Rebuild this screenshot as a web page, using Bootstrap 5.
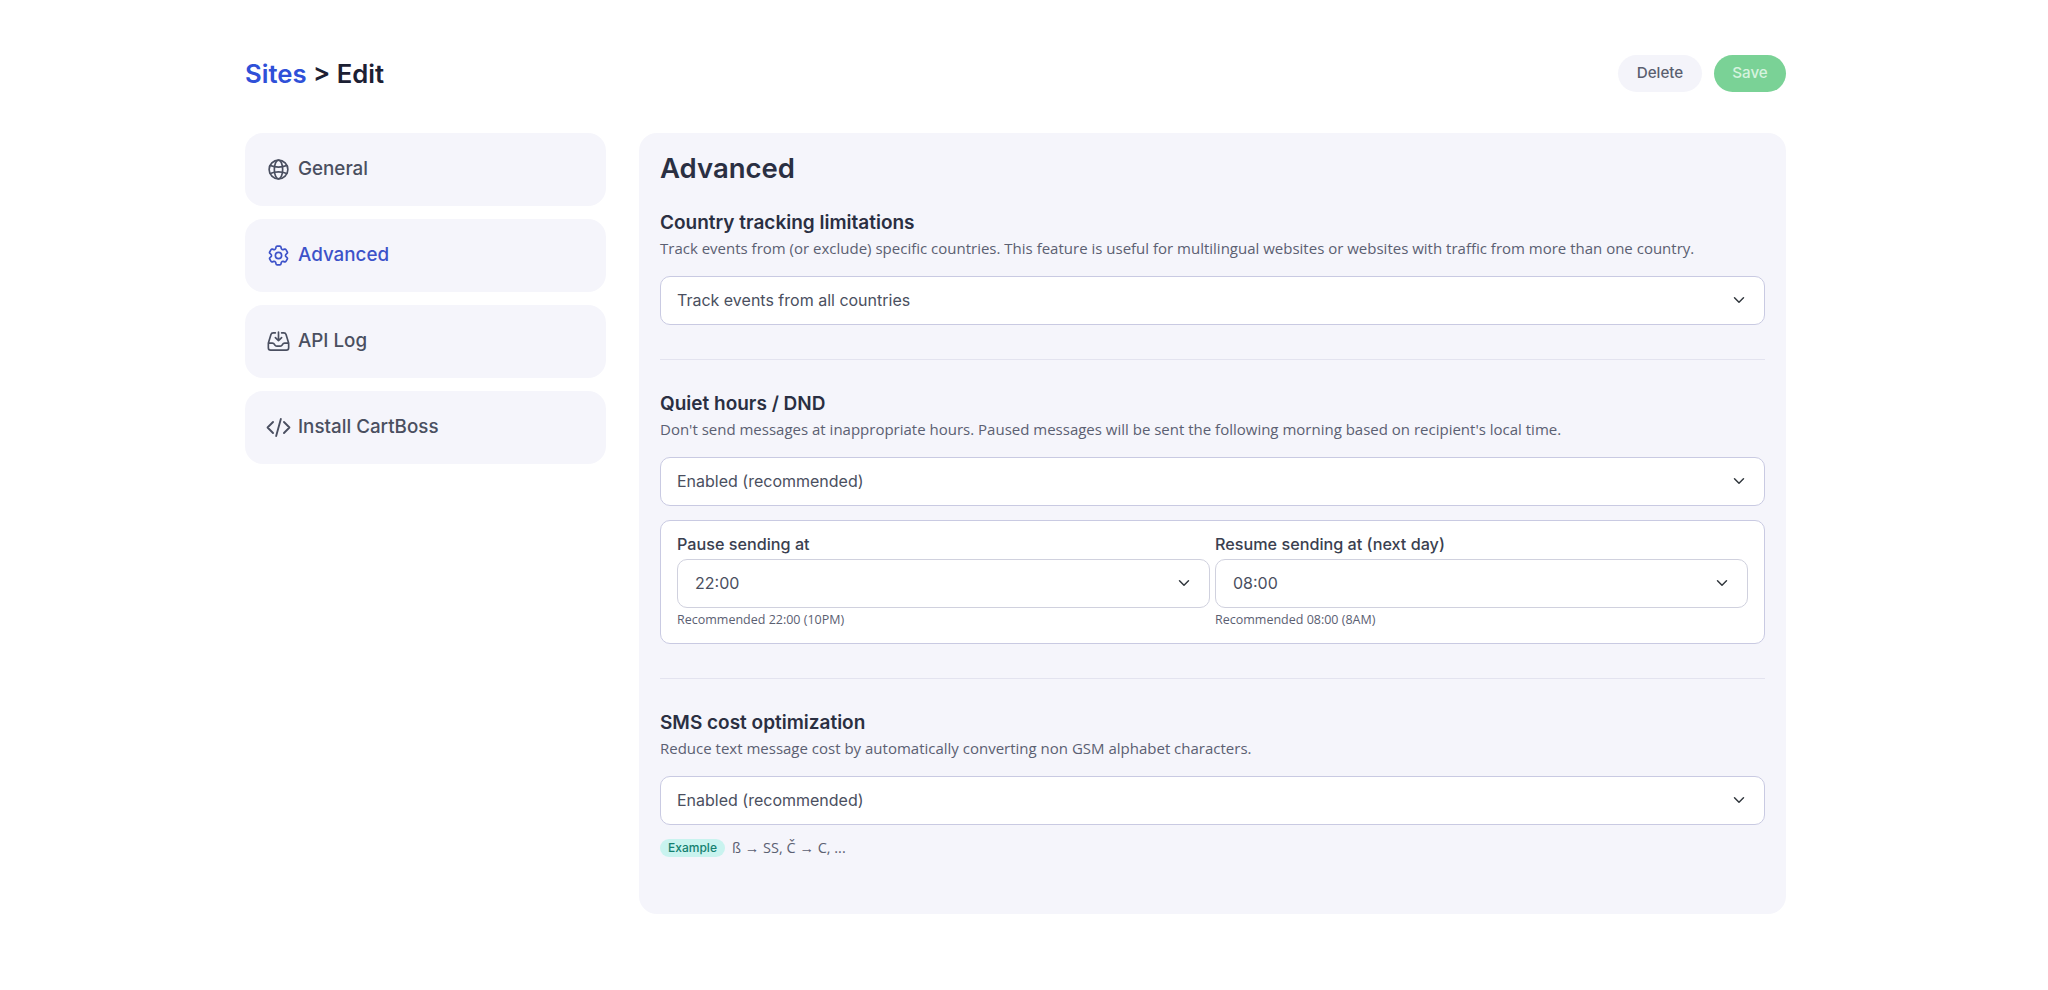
<!doctype html>
<html lang="en">
<head>
<meta charset="utf-8">
<title>Sites &gt; Edit</title>
<link rel="stylesheet" href="https://cdn.jsdelivr.net/npm/bootstrap@5.3.0/dist/css/bootstrap.min.css">
<style>
body{background:#fff;font-family:"Inter","Liberation Sans",sans-serif;color:#2a2f42;}
.page-shell{width:1541px;margin-left:245px;padding-top:55px;}
.page-head{height:37px;margin-bottom:41px;}
.page-title{font-size:25.7px;font-weight:600;line-height:36px;margin:0;color:#1c2033;}
.page-title a{color:#2f50d8;text-decoration:none;}
.btn-pill{height:37px;border-radius:19px;border:0;font-size:15.2px;font-weight:500;padding:0 0 2px;line-height:35px;}
.btn-del{width:84px;background:#f4f4fa;color:#5a5f70;}
.btn-sv{width:72px;background:#7ad296;color:#d6f3df;}
.btn-sv:disabled{background:#7ad296;color:#d6f3df;opacity:1;}
.side-col{width:361px;flex:none;gap:13px;}
.side-item{height:73px;background:#f5f5fb;border-radius:18px;padding:0 0 1px 21px;gap:7px;color:#4a4f60;font-size:18.8px;font-weight:500;text-decoration:none;}
.side-item svg{width:25px;height:25px;flex:none;}
.side-item.is-on{color:#3d52c9;}
.main-col{width:1147px;height:781px;margin-left:33px;background:#f5f5fb;border-radius:18px;padding:16.5px 21px 0;}
.main-title{font-size:27.5px;font-weight:600;line-height:36px;margin:0 0 24px;color:#2a2f42;}
.sec-title{font-size:19px;font-weight:600;line-height:26px;margin:0;color:#2a2f42;}
.sec-desc{font-family:"Open Sans","Noto Sans",sans-serif;font-size:15px;line-height:24px;margin:0 0 16px;color:#5b6072;}
.form-select.sel-x{height:49px;border:1.5px solid #c9cae2;border-radius:10px;padding:0 40px 0 16px;font-size:16px;color:#4a4f60;background-position:right 17px center;box-shadow:none;}
.form-select.sel-t{border-color:#d0d1de;padding-left:17px;}
.sec-rule{margin:34px 0 31px;border:0;border-top:1px solid #e3e3ef;opacity:1;}
.time-box{height:124px;margin-top:14px;background:#fff;border:1.5px solid #c9cae2;border-radius:10px;padding:11px 16px 0;gap:5px;}
.time-cell{flex:1 1 0;min-width:0;}
.time-label{display:block;font-size:16.2px;font-weight:500;line-height:24px;margin:0 0 3px;color:#3a3f50;}
.time-hint{font-family:"Open Sans","Noto Sans",sans-serif;font-size:12.5px;line-height:16px;margin-top:4px;color:#5b6072;}
.ex-row{margin-top:13px;gap:7px;font-family:"Open Sans","Noto Sans",sans-serif;font-size:14.5px;color:#5b6072;line-height:20px;}
.ex-tag{font-family:"Inter",sans-serif;background:#c9f3ef;color:#14806f;border-radius:9px;font-size:12px;font-weight:500;width:65px;height:18px;line-height:18px;text-align:center;}
</style>
</head>
<body>
<div class="page-shell">
  <header class="page-head d-flex justify-content-between align-items-center">
    <h1 class="page-title"><a href="#">Sites</a> &gt; Edit</h1>
    <div class="d-flex gap-2">
      <button type="button" class="btn btn-pill btn-del">Delete</button>
      <button type="button" class="btn btn-pill btn-sv ms-1" disabled>Save</button>
    </div>
  </header>
  <div class="d-flex align-items-start">
    <nav class="side-col d-flex flex-column">
      <a href="#" class="side-item d-flex align-items-center">
        <svg viewBox="0 0 24 24" fill="none" stroke="currentColor" stroke-width="1.6" stroke-linecap="round" stroke-linejoin="round"><circle cx="12" cy="12" r="9"/><ellipse cx="12" cy="12" rx="4" ry="9"/><path d="M4 8.2c5 1.8 11 1.8 16 0M4 15.8c5-1.8 11-1.8 16 0"/></svg>
        General
      </a>
      <a href="#" class="side-item is-on d-flex align-items-center">
        <svg viewBox="0 0 24 24" fill="none" stroke="currentColor" stroke-width="1.6" stroke-linecap="round" stroke-linejoin="round"><path d="M9.594 3.94c.09-.542.56-.94 1.11-.94h2.593c.55 0 1.02.398 1.11.94l.213 1.281c.063.374.313.686.645.87.074.04.147.083.22.127.325.196.72.257 1.075.124l1.217-.456a1.125 1.125 0 0 1 1.37.49l1.296 2.247a1.125 1.125 0 0 1-.26 1.431l-1.003.827c-.293.241-.438.613-.43.992a7.723 7.723 0 0 1 0 .255c-.008.378.137.75.43.991l1.004.827c.424.35.534.955.26 1.43l-1.298 2.247a1.125 1.125 0 0 1-1.369.491l-1.217-.456c-.355-.133-.75-.072-1.076.124a6.47 6.47 0 0 1-.22.128c-.331.183-.581.495-.644.869l-.213 1.281c-.09.543-.56.94-1.11.94h-2.594c-.55 0-1.019-.398-1.11-.94l-.213-1.281c-.062-.374-.312-.686-.644-.87a6.52 6.52 0 0 1-.22-.127c-.325-.196-.72-.257-1.076-.124l-1.217.456a1.125 1.125 0 0 1-1.369-.49l-1.297-2.247a1.125 1.125 0 0 1 .26-1.431l1.004-.827c.292-.24.437-.613.43-.991a6.932 6.932 0 0 1 0-.255c.007-.38-.138-.751-.43-.992l-1.004-.827a1.125 1.125 0 0 1-.26-1.43l1.297-2.247a1.125 1.125 0 0 1 1.37-.491l1.216.456c.356.133.751.072 1.076-.124.072-.044.146-.086.22-.128.332-.183.582-.495.644-.869l.214-1.28Z"/><path d="M15 12a3 3 0 1 1-6 0 3 3 0 0 1 6 0Z"/></svg>
        Advanced
      </a>
      <a href="#" class="side-item d-flex align-items-center">
        <svg viewBox="0 0 24 24" fill="none" stroke="currentColor" stroke-width="1.6" stroke-linecap="round" stroke-linejoin="round"><path d="M9 3.75H6.912a2.25 2.25 0 0 0-2.15 1.588L2.35 13.177a2.25 2.25 0 0 0-.1.661V18a2.25 2.25 0 0 0 2.25 2.25h15A2.25 2.25 0 0 0 21.75 18v-4.162c0-.224-.034-.447-.1-.661L19.24 5.338a2.25 2.25 0 0 0-2.15-1.588H15M2.25 13.5h3.86a2.25 2.25 0 0 1 2.012 1.244l.256.512a2.25 2.25 0 0 0 2.013 1.244h3.218a2.25 2.25 0 0 0 2.013-1.244l.256-.512a2.25 2.25 0 0 1 2.013-1.244h3.859M12 3v8.25m0 0-3-3m3 3 3-3"/></svg>
        API Log
      </a>
      <a href="#" class="side-item d-flex align-items-center">
        <svg viewBox="0 0 24 24" fill="none" stroke="currentColor" stroke-width="1.8" stroke-linecap="round" stroke-linejoin="round"><path d="M17.25 6.75 22.5 12l-5.25 5.25m-10.5 0L1.5 12l5.25-5.25m7.5-3-4.5 16.5"/></svg>
        Install CartBoss
      </a>
    </nav>
    <main class="main-col">
      <h2 class="main-title">Advanced</h2>
      <section>
        <h3 class="sec-title">Country tracking limitations</h3>
        <p class="sec-desc">Track events from (or exclude) specific countries. This feature is useful for multilingual websites or websites with traffic from more than one country.</p>
        <select class="form-select sel-x"><option>Track events from all countries</option></select>
      </section>
      <hr class="sec-rule">
      <section>
        <h3 class="sec-title">Quiet hours / DND</h3>
        <p class="sec-desc">Don't send messages at inappropriate hours. Paused messages will be sent the following morning based on recipient's local time.</p>
        <select class="form-select sel-x"><option>Enabled (recommended)</option></select>
        <div class="time-box d-flex">
          <div class="time-cell">
            <label class="time-label">Pause sending at</label>
            <select class="form-select sel-x sel-t"><option>22:00</option></select>
            <div class="time-hint">Recommended 22:00 (10PM)</div>
          </div>
          <div class="time-cell">
            <label class="time-label">Resume sending at (next day)</label>
            <select class="form-select sel-x sel-t"><option>08:00</option></select>
            <div class="time-hint">Recommended 08:00 (8AM)</div>
          </div>
        </div>
      </section>
      <hr class="sec-rule">
      <section>
        <h3 class="sec-title">SMS cost optimization</h3>
        <p class="sec-desc">Reduce text message cost by automatically converting non GSM alphabet characters.</p>
        <select class="form-select sel-x"><option>Enabled (recommended)</option></select>
        <div class="ex-row d-flex align-items-center"><span class="ex-tag">Example</span><span>ß → SS, Č → C, ...</span></div>
      </section>
    </main>
  </div>
</div>
<script src="https://cdn.jsdelivr.net/npm/bootstrap@5.3.0/dist/js/bootstrap.bundle.min.js"></script>
</body>
</html>
